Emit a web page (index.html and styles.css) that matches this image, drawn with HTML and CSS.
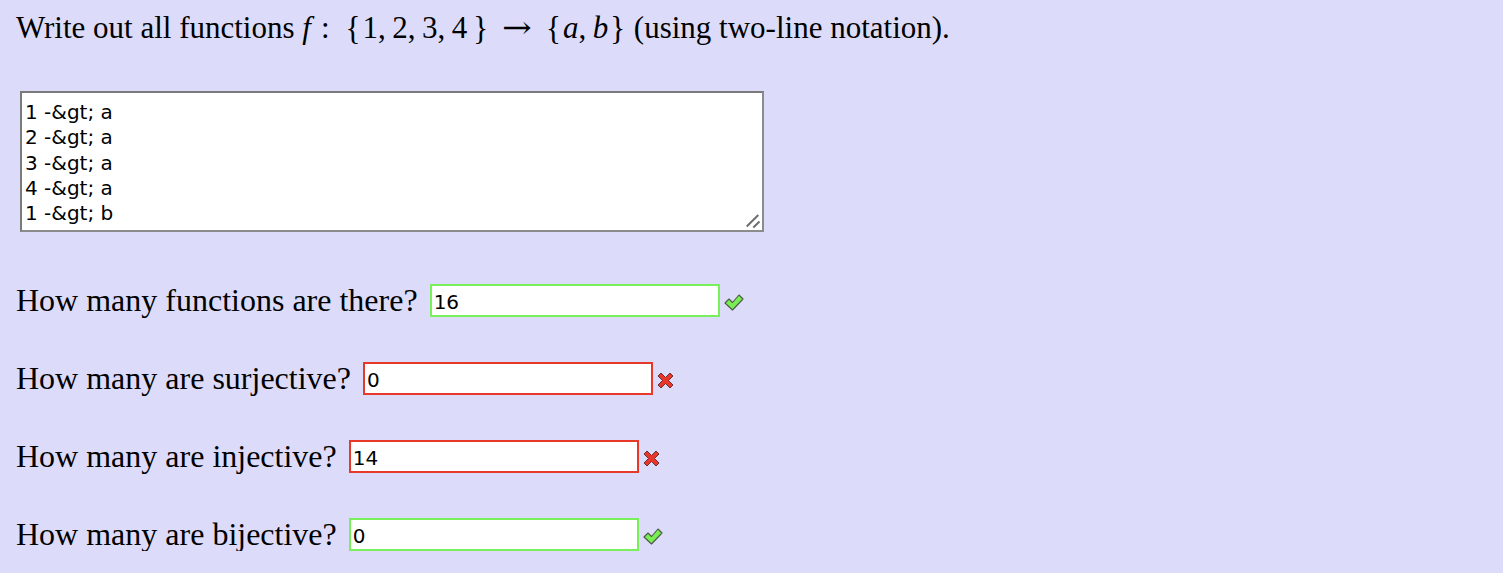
FILE: index.html
```html
<!DOCTYPE html>
<html lang="en">
<head>
<meta charset="utf-8">
<title>Functions exercise</title>
<link rel="stylesheet" href="styles.css">
</head>
<body>
<div class="page">
  <p class="title">Write out all functions <span class="math"><i class="mi">f</i><span class="colon">:</span><span class="brace brace-open">{</span>1<span class="sep">,</span>2<span class="sep">,</span>3<span class="sep">,</span>4<span class="brace brace-close">}</span><span class="arrow">→</span><span class="brace brace-open">{</span><i class="mi">a</i><span class="sep">,</span><i class="mi">b</i><span class="brace brace-close brace-end">}</span></span> (using two-line notation).</p>

  <div class="area-wrap">
    <textarea class="answer-area" spellcheck="false">1 -&amp;gt; a
2 -&amp;gt; a
3 -&amp;gt; a
4 -&amp;gt; a
1 -&amp;gt; b</textarea>
    <svg class="grip" viewBox="0 0 16 16" width="16" height="16"><line x1="1.7" y1="13.5" x2="13.3" y2="2" stroke="#6e6e6e" stroke-width="2"/><line x1="8.3" y1="14.5" x2="14.5" y2="8.5" stroke="#6e6e6e" stroke-width="2"/></svg>
  </div>

  <div class="questions">
    <div class="q">
      <label class="q-label">How many functions are there?</label>
      <input class="ans ans-ok" type="text" value="16">
      <svg class="mark mark-ok" viewBox="0 0 20 18" width="20" height="18"><polygon points="1,10 5,6 8.5,9.5 15,2 19,6 8.5,17" fill="#78ee52" stroke="#4a5a44" stroke-width="1.1" stroke-linejoin="round"/></svg>
    </div>
    <div class="q">
      <label class="q-label">How many are surjective?</label>
      <input class="ans ans-bad" type="text" value="0">
      <svg class="mark mark-bad" viewBox="0 0 17 17" width="17" height="17"><polygon points="1,4 4,1 8.5,5.5 13,1 16,4 11.5,8.5 16,13 13,16 8.5,11.5 4,16 1,13 5.5,8.5" fill="#e8362a" stroke="#6b3030" stroke-width="1" stroke-linejoin="round"/></svg>
    </div>
    <div class="q">
      <label class="q-label">How many are injective?</label>
      <input class="ans ans-bad" type="text" value="14">
      <svg class="mark mark-bad" viewBox="0 0 17 17" width="17" height="17"><polygon points="1,4 4,1 8.5,5.5 13,1 16,4 11.5,8.5 16,13 13,16 8.5,11.5 4,16 1,13 5.5,8.5" fill="#e8362a" stroke="#6b3030" stroke-width="1" stroke-linejoin="round"/></svg>
    </div>
    <div class="q">
      <label class="q-label">How many are bijective?</label>
      <input class="ans ans-ok" type="text" value="0">
      <svg class="mark mark-ok" viewBox="0 0 20 18" width="20" height="18"><polygon points="1,10 5,6 8.5,9.5 15,2 19,6 8.5,17" fill="#78ee52" stroke="#4a5a44" stroke-width="1.1" stroke-linejoin="round"/></svg>
    </div>
  </div>
</div>
</body>
</html>
```

FILE: styles.css
```css
html, body {
  margin: 0;
  padding: 0;
}
body {
  background: #dcdcfa;
  color: #000;
  font-family: "Liberation Serif", "Times New Roman", serif;
}
.page {
  padding: 9px 16px 0 16px;
}
.title {
  margin: 0;
  font-size: 31px;
  line-height: 36px;
  white-space: nowrap;
}
.math {
  font-family: "Liberation Serif", serif;
  font-size: 31px;
}
.mi {
  font-style: italic;
}
.colon {
  margin: 0 16px 0 10px;
}
.sep {
  margin-right: 6.5px;
}
.brace {
  display: inline-block;
  transform: scaleY(1.12);
}
.brace-open {
  margin-right: 2px;
}
.brace-close {
  margin-left: 6px;
}
.brace-end {
  margin-left: 2px;
  margin-right: 1px;
}
.arrow {
  display: inline-block;
  width: 30px;
  text-align: center;
  margin: 0 14px 0 14px;
  font-family: "DejaVu Serif", serif;
  transform: scaleX(1.15);
}
.area-wrap {
  position: relative;
  margin-top: 45px;
  padding-left: 4px;
  width: 744px;
  height: 141px;
}
.answer-area {
  box-sizing: border-box;
  display: block;
  width: 744px;
  height: 141px;
  margin: 0;
  padding: 7px 3px 2px 3px;
  border: 2px solid #8c8c8c;
  border-top-color: #7a7a7a;
  border-left-color: #7a7a7a;
  background: #fff;
  font-family: "DejaVu Sans", Verdana, sans-serif;
  font-size: 20px;
  line-height: 25.3px;
  color: #000;
  resize: none;
  outline: none;
  overflow: hidden;
}
.grip {
  position: absolute;
  right: 3px;
  bottom: 3px;
}
.questions {
  margin-top: 52px;
  display: flex;
  flex-direction: column;
  gap: 45px;
}
.q {
  display: flex;
  align-items: center;
  height: 33px;
}
.q-label {
  font-size: 32px;
  line-height: 37px;
  white-space: nowrap;
  margin-right: 12px;
}
.ans {
  box-sizing: border-box;
  width: 290px;
  height: 33px;
  margin: 0;
  padding: 3px 3px 0 2px;
  border: 2px solid;
  background: #fff;
  font-family: "DejaVu Sans", Verdana, sans-serif;
  font-size: 20px;
  color: #000;
  outline: none;
}
.ans-ok {
  border-color: #77f05a;
}
.ans-bad {
  border-color: #e8382a;
}
.mark {
  display: block;
  margin-left: 4px;
}
.mark-ok {
  margin-top: 2px;
}
.mark-bad {
  margin-top: 4px;
}
```
